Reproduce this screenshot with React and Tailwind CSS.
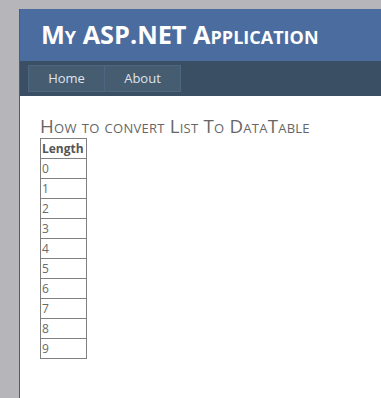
import React from "react";

const rows = [0, 1, 2, 3, 4, 5, 6, 7, 8, 9];

export default function App() {
  return (
    <div className="min-h-[398px] w-[381px] overflow-hidden bg-[#b6b6ba] pl-[19px] pt-[9px] font-['Open_Sans',sans-serif]">
      <div className="min-h-[389px] border-l border-[#4b5f74] bg-white">
        {/* Header */}
        <div className="flex h-[52px] items-center bg-[#4b6c9e] pl-[21px]">
          <h1 className="whitespace-nowrap text-[25.3px] font-bold leading-none text-white [font-variant:small-caps]">
            My ASP.NET Application
          </h1>
        </div>

        {/* Menu */}
        <div className="flex h-[35px] bg-[#3a4f63] pl-[8px] pt-[4px]">
          {["Home", "About"].map((item) => (
            <a
              key={item}
              href="#"
              className="-mr-px flex h-[27px] w-[77px] items-center justify-center border border-[#4f6680] bg-[#465c71] text-[13px] text-[#dde4ec]"
            >
              {item}
            </a>
          ))}
        </div>

        {/* Main */}
        <div className="pl-[20px] pt-[18px]">
          <h2 className="whitespace-nowrap text-[18.7px] leading-[24px] tracking-[0.25px] text-[#666666] [font-variant:small-caps]">
            How to convert List To DataTable
          </h2>
          <table className="border-collapse text-[12px] text-[#696969]">
            <thead>
              <tr>
                <th className="h-[20px] border border-[#808080] px-[1px] text-left font-bold text-[#555555]">
                  Length
                </th>
              </tr>
            </thead>
            <tbody>
              {rows.map((n) => (
                <tr key={n}>
                  <td className="h-[20px] w-[46px] border border-[#808080] px-[1px]">{n}</td>
                </tr>
              ))}
            </tbody>
          </table>
        </div>
      </div>
    </div>
  );
}
